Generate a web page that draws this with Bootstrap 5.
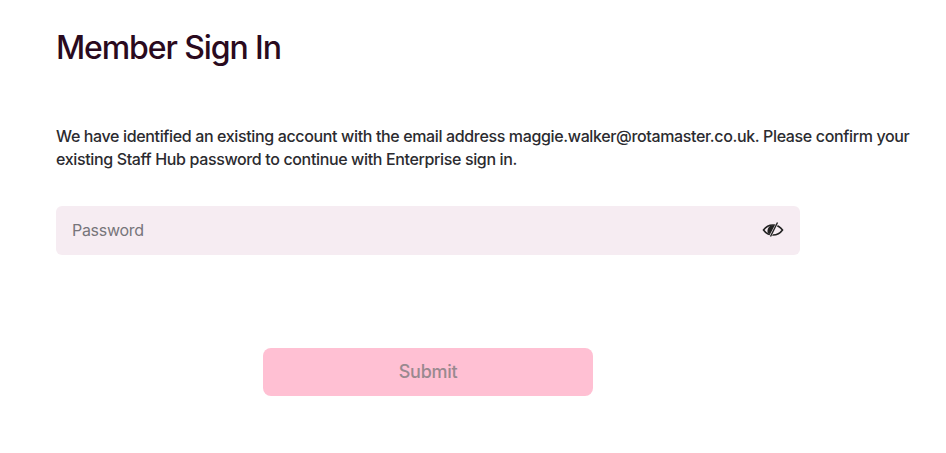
<!DOCTYPE html>
<html lang="en"><head><meta charset="utf-8">
<link href="https://cdn.jsdelivr.net/npm/bootstrap@5.3.0/dist/css/bootstrap.min.css" rel="stylesheet">
<style>
body{background:#fff;font-family:"Inter","Noto Sans",sans-serif;overflow:hidden}
.signin-wrap{padding:24px 0 0 56px;width:946px}
.signin-title{font-size:32px;font-weight:500;line-height:48px;color:#2a0a1e;letter-spacing:-1.1px;margin:0 0 53px}
.signin-text{font-size:16px;font-weight:500;line-height:23px;color:#2b2b2f;letter-spacing:-.36px;margin:0 0 35px;white-space:nowrap}
.pw-box{width:744px;height:49px;background:#f6ecf2;border-radius:6px;padding:0 16px 2px;margin-bottom:93px}
.pw-input{font-size:16px;color:#333;letter-spacing:-.3px;background:transparent;padding:0;outline:none}
.pw-input::placeholder{color:#77757a;opacity:1}
.submit-btn{width:330px;height:48px;margin-left:207px;padding:0 0 2px;background:#ffc0d3;color:#99898f;border:0;border-radius:8px;font-size:18px;font-weight:500;letter-spacing:-.3px}
</style></head><body>
<main class="signin-wrap">
<h1 class="signin-title">Member Sign In</h1>
<p class="signin-text">We have identified an existing account with the email address maggie.walker@rotamaster.co.uk. Please confirm your<br>existing Staff Hub password to continue with Enterprise sign in.</p>
<div class="pw-box d-flex align-items-center">
<input class="pw-input border-0 flex-grow-1 shadow-none" type="password" placeholder="Password" aria-label="Password">
<svg width="22" height="18" viewBox="0 0 22 18" fill="none"><path d="M1.500 9C4 5.500 7 4 11 4s7 1.500 9.500 5C18 12.500 15 14 11 14S4 12.500 1.500 9Z" stroke="#222" stroke-width="1.600"/><path d="M14 3.500 9 14 5.500 11.500Q5 7 8 5Z" fill="#222"/><path d="M16 1 8 16" stroke="#f6ecf2" stroke-width="2.600"/><path d="M15.500 1.500 8.500 15.500" stroke="#222" stroke-width="1.400"/></svg>
</div>
<button class="submit-btn d-block" type="button" disabled>Submit</button>
</main>
<script src="https://cdn.jsdelivr.net/npm/bootstrap@5.3.0/dist/js/bootstrap.bundle.min.js"></script>
</body></html>
